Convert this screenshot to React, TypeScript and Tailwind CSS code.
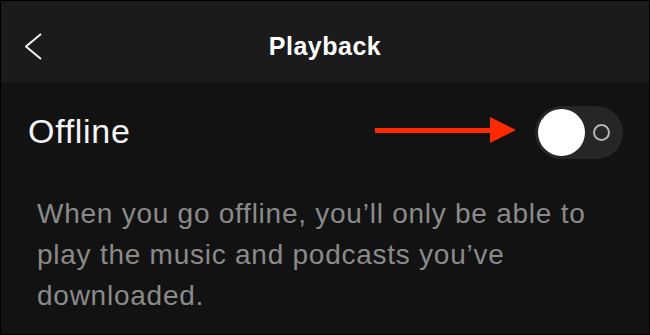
import React from "react";

function BackChevron() {
    return (
        <svg width="17" height="27" viewBox="0 0 17 27" className="block">
            <polyline points="16,1 1,13.5 16,26" fill="none" stroke="#f2f2f2" strokeWidth="2" />
        </svg>
    )
}

function RedArrow() {
    return (
        <svg width="142" height="26" viewBox="0 0 142 26" className="block">
            <rect x="0" y="11" width="118" height="5" fill="#ff2a00" />
            <polygon points="115,0 141,13 115,26" fill="#ff2a00" />
        </svg>
    )
}

function Toggle() {
    return (
        <div className="w-[88px] h-[53px] rounded-full bg-[#262626] flex items-center pl-[3px] pr-[13px] justify-between">
            <div className="w-[47px] h-[47px] rounded-full bg-white" />
            <div className="w-[17px] h-[17px] rounded-full border-2 border-[#b3b3b3]" />
        </div>
    )
}

function Header() {
    return (
        <div className="h-[81px] bg-[#1b1b1b] grid grid-cols-[1fr_auto_1fr] items-center pt-[10px]">
            <div className="pl-[24px]">
                <BackChevron />
            </div>
            <div className="text-white font-bold text-[25px] tracking-[0.5px] leading-none">
                Playback
            </div>
            <div />
        </div>
    )
}

export default function App() {
    const font = {fontFamily: '"Liberation Sans", Arial, sans-serif'}

    return (
        <div className="w-[650px] h-[335px] border border-black bg-[#121212] overflow-hidden flex flex-col" style={font}>
            <Header />
            <div className="h-[100px] flex items-center pl-[27px] pr-[26px]">
                <div className="text-[34px] text-[#f5f5f5] tracking-[0.7px] leading-none pb-[2px]">Offline</div>
                <div className="ml-auto flex items-center gap-[18px]">
                    <div className="-mt-[5px]">
                        <RedArrow />
                    </div>
                    <Toggle />
                </div>
            </div>
            <p className="mt-[11px] ml-[36px] w-[560px] text-[28px] leading-[41px] tracking-[0.75px] text-[#8a8a8a]">
                When you go offline, you’ll only be able to play the music and podcasts you’ve downloaded.
            </p>
        </div>
    )
}
